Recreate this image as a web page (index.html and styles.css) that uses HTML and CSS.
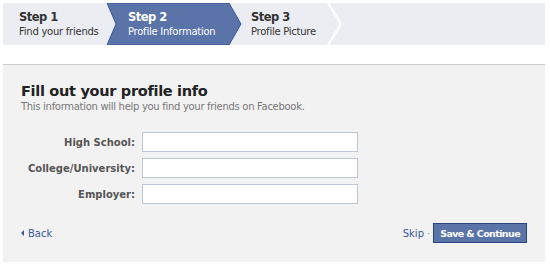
FILE: index.html
```html
<!DOCTYPE html>
<html lang="en">
<head>
  <meta charset="UTF-8" />
  <title>Profile Information</title>
  <link rel="stylesheet" href="styles.css">
</head>
<body>
  <div class="steps">
    <div class="step">
      <div class="step-title">Step 1</div>
      <div class="step-name">Find your friends</div>
    </div>
    <div class="step active">
      <svg class="chevron" width="136" height="42" viewBox="0 0 136 42">
        <polygon points="0,0 122,0 134,21 122,42 0,42 9,21" fill="#5a73a8" stroke="#3b5998" stroke-width="1"/>
      </svg>
      <div class="step-title">Step 2</div>
      <div class="step-name">Profile Information</div>
    </div>
    <div class="step last">
      <svg class="chevron" width="104" height="42" viewBox="0 0 104 42">
        <polyline points="86,0 99,21 86,42" fill="none" stroke="#fff" stroke-width="2"/>
      </svg>
      <div class="step-title">Step 3</div>
      <div class="step-name">Profile Picture</div>
    </div>
  </div>

  <div class="panel">
    <h2>Fill out your profile info</h2>
    <p class="sub">This information will help you find your friends on Facebook.</p>

    <form class="fields">
      <label for="school">High School:</label>
      <input type="text" id="school" />
      <label for="college">College/University:</label>
      <input type="text" id="college" />
      <label for="employer">Employer:</label>
      <input type="text" id="employer" />
    </form>

    <div class="actions">
      <a class="back" href="#"><span class="arrow"></span>Back</a>
      <div class="right">
        <a class="skip" href="#">Skip</a>
        <span class="dot">·</span>
        <button type="button" class="save">Save &amp; Continue</button>
      </div>
    </div>
  </div>
</body>
</html>
```

FILE: styles.css
```css
body {
  margin: 3px 5px 0 3px;
  font-family: "DejaVu Sans", sans-serif;
  background-color: #fff;
  color: #333;
}

.steps {
  display: flex;
  height: 42px;
  background-color: #ecedf2;
}

.step {
  position: relative;
  padding: 6px 0 0 16px;
  width: 88px;
}

.step-title {
  position: relative;
  font-size: 11.5px;
  font-weight: bold;
  letter-spacing: -0.5px;
  color: #333;
  line-height: 16px;
}

.step-name {
  position: relative;
  font-size: 10px;
  letter-spacing: -0.25px;
  color: #333;
  line-height: 13px;
}

.step.active {
  width: 114px;
  padding-left: 21px;
}

.step.active .step-title,
.step.active .step-name {
  color: #fff;
}

.step.last {
  width: 100px;
  padding-left: 9px;
}

.chevron {
  position: absolute;
  left: 0;
  top: 0;
}

.panel {
  margin-top: 19px;
  border-top: 1px solid #ccc;
  background-color: #f2f2f2;
  height: 197px;
  padding: 0 18px;
}

h2 {
  margin: 17px 0 0;
  font-size: 14.5px;
  letter-spacing: -0.3px;
  color: #222;
  line-height: 18px;
}

.sub {
  margin: 0;
  font-size: 10px;
  letter-spacing: -0.3px;
  color: #777;
  line-height: 13px;
}

.fields {
  display: grid;
  grid-template-columns: 114px 216px;
  column-gap: 7px;
  row-gap: 6px;
  margin-top: 19px;
  align-items: center;
}

label {
  text-align: right;
  font-size: 10px;
  font-weight: bold;
  color: #555;
}

input[type="text"] {
  height: 20px;
  box-sizing: border-box;
  border: 1px solid #bdc7d8;
  background: #fff;
  margin: 0;
}

.actions {
  display: flex;
  justify-content: space-between;
  align-items: center;
  margin-top: 19px;
}

.back {
  font-size: 10px;
  color: #3b5998;
  text-decoration: none;
  display: flex;
  align-items: center;
}

.arrow {
  width: 0;
  height: 0;
  border-top: 3px solid transparent;
  border-bottom: 3px solid transparent;
  border-right: 3px solid #3b5998;
  margin-right: 4px;
}

.right {
  display: flex;
  align-items: center;
}

.skip {
  font-size: 10px;
  color: #3b5998;
  text-decoration: none;
}

.dot {
  color: #999;
  font-size: 10px;
  margin: 0 3px;
}

.save {
  font-family: "DejaVu Sans", sans-serif;
  font-size: 9.5px;
  font-weight: bold;
  letter-spacing: -0.6px;
  color: #fff;
  background-color: #5b74a8;
  border: 1px solid #29447e;
  padding: 3px 6px;
  height: 20px;
}
```
